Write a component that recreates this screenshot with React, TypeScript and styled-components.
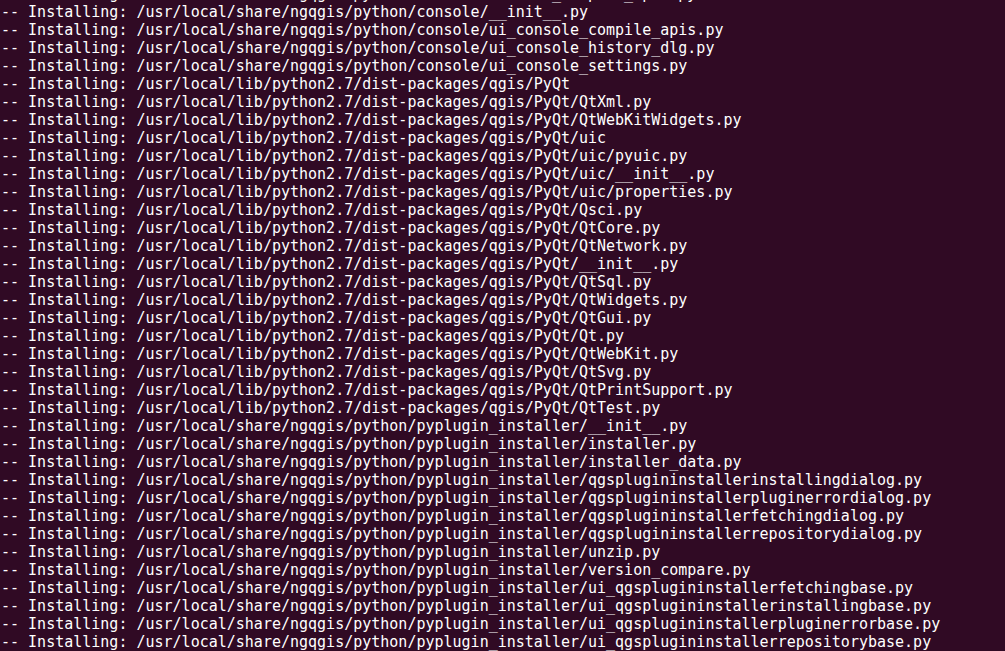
import React from "react";
import styled, { createGlobalStyle } from "styled-components";

const Global = createGlobalStyle`
  html, body {
    margin: 0;
    padding: 0;
    background: #300a24;
    overflow: hidden;
  }
`;

const Terminal = styled.main`
  width: 1005px;
  height: 651px;
  overflow: hidden;
  background: #300a24;
  box-sizing: border-box;
  padding-left: 1px;
`;

const Output = styled.pre`
  margin: -15px 0 0 0;
  font-family: "DejaVu Sans Mono", "Liberation Mono", monospace;
  font-size: 15px;
  line-height: 18px;
  color: #ffffff;
  white-space: pre;
`;

const Line = styled.div`
  height: 18px;
`;

const SHARE = "/usr/local/share/ngqgis/python/";
const LIB = "/usr/local/lib/python2.7/dist-packages/qgis/PyQt";
const PI = SHARE + "pyplugin_installer/";

const paths: string[] = [
  SHARE + "console/console_compile_apis.py",
  SHARE + "console/__init__.py",
  SHARE + "console/ui_console_compile_apis.py",
  SHARE + "console/ui_console_history_dlg.py",
  SHARE + "console/ui_console_settings.py",
  LIB,
  LIB + "/QtXml.py",
  LIB + "/QtWebKitWidgets.py",
  LIB + "/uic",
  LIB + "/uic/pyuic.py",
  LIB + "/uic/__init__.py",
  LIB + "/uic/properties.py",
  LIB + "/Qsci.py",
  LIB + "/QtCore.py",
  LIB + "/QtNetwork.py",
  LIB + "/__init__.py",
  LIB + "/QtSql.py",
  LIB + "/QtWidgets.py",
  LIB + "/QtGui.py",
  LIB + "/Qt.py",
  LIB + "/QtWebKit.py",
  LIB + "/QtSvg.py",
  LIB + "/QtPrintSupport.py",
  LIB + "/QtTest.py",
  PI + "__init__.py",
  PI + "installer.py",
  PI + "installer_data.py",
  PI + "qgsplugininstallerinstallingdialog.py",
  PI + "qgsplugininstallerpluginerrordialog.py",
  PI + "qgsplugininstallerfetchingdialog.py",
  PI + "qgsplugininstallerrepositorydialog.py",
  PI + "unzip.py",
  PI + "version_compare.py",
  PI + "ui_qgsplugininstallerfetchingbase.py",
  PI + "ui_qgsplugininstallerinstallingbase.py",
  PI + "ui_qgsplugininstallerpluginerrorbase.py",
  PI + "ui_qgsplugininstallerrepositorybase.py",
];

export default function App() {
  return (
    <>
      <Global />
      <Terminal>
        <Output>
          {paths.map((p, i) => (
            <Line key={i}>{"-- Installing: " + p}</Line>
          ))}
        </Output>
      </Terminal>
    </>
  );
}
